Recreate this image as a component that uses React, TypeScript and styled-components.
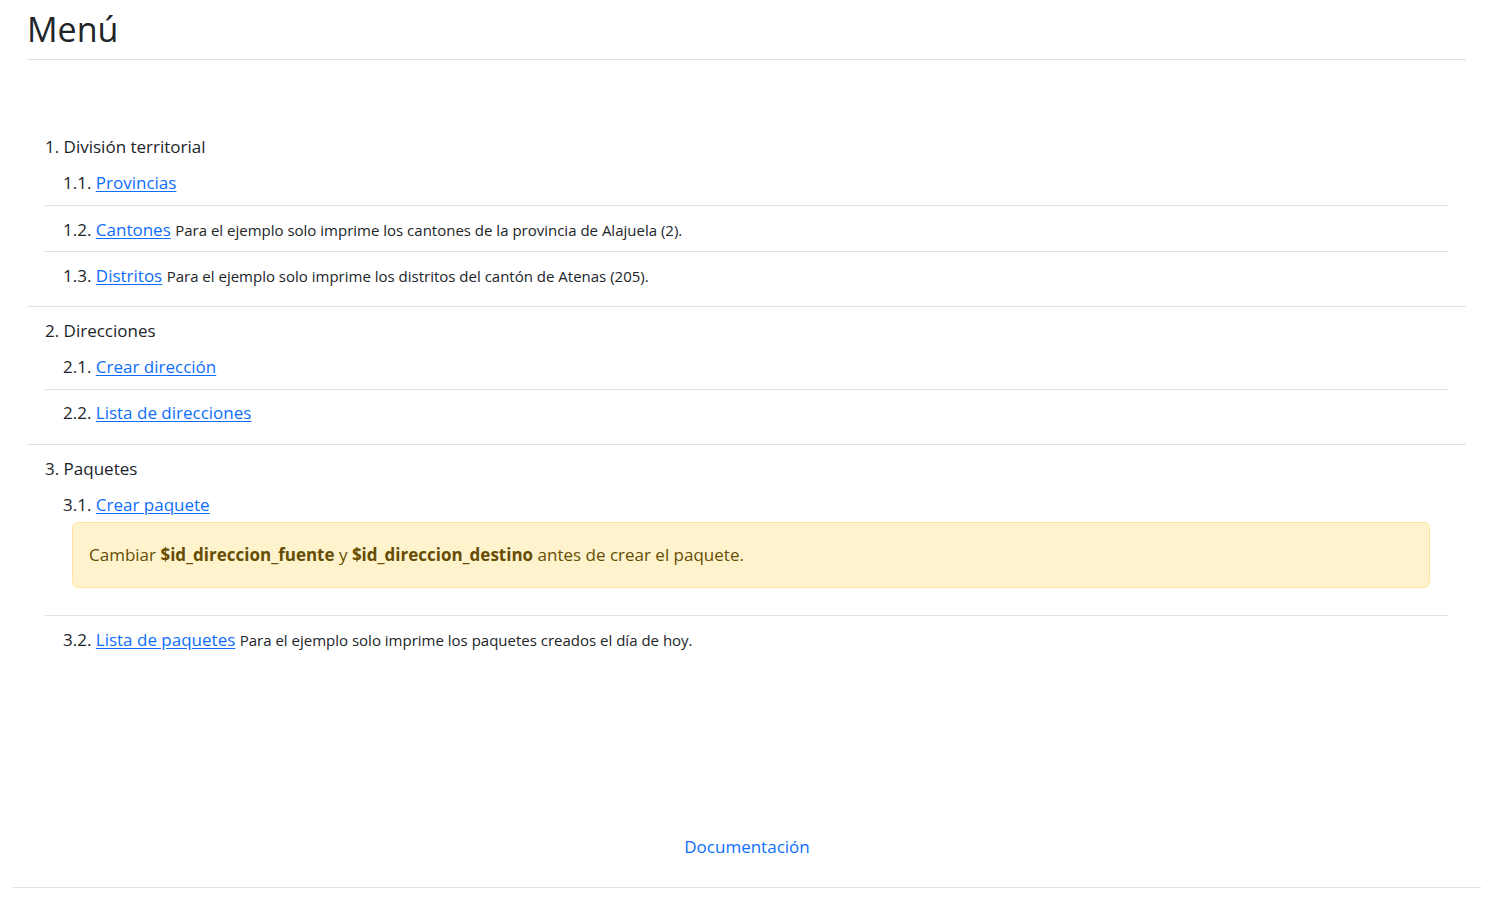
import React from "react";
import styled, { createGlobalStyle } from "styled-components";

const Global = createGlobalStyle`
  html, body { margin: 0; padding: 0; background: #fff; }
  body {
    font-family: "Open Sans", "Noto Sans", sans-serif;
    font-size: 17px;
    line-height: 24px;
    color: #212529;
  }
  * { box-sizing: border-box; }
`;

const Page = styled.div`
  padding: 0 9px 0 13px;
`;

const Main = styled.main`
  padding: 0 15px 0 14px;
`;

const Header = styled.header`
  padding-top: 5px;
  padding-bottom: 6px;
  border-bottom: 1px solid #dee2e6;
`;

const Title = styled.h1`
  margin: 0;
  font-size: 34px;
  line-height: 48px;
  font-weight: 400;
  color: #212529;
`;

const Sections = styled.ol`
  list-style: none;
  margin: 62px 0 0;
  padding: 0;
`;

const Section = styled.li`
  padding: 12px 18px 9px;
  border-top: 1px solid #dee2e6;
  &:first-child { border-top-color: transparent; }
`;

const SectionTitle = styled.div`
  line-height: 24px;
`;

const SubList = styled.ol`
  list-style: none;
  margin: 1px 0 0;
  padding: 0;
`;

const SubItem = styled.li<{ $noted?: boolean }>`
  padding: ${(p) => (p.$noted ? "12px 18px 9px" : "11px 18px 10px")};
  border-top: 1px solid #dee2e6;
  &:first-child { border-top: 0; }
`;

const Link = styled.a`
  color: #0d6efd;
  text-decoration: underline;
  text-underline-offset: 2px;
`;

const Note = styled.small`
  font-size: 15px;
  line-height: 1;
`;

const Alert = styled.div`
  margin: 5px 0 17px 9px;
  padding: 16px;
  border: 1px solid #ffe69c;
  border-radius: 6px;
  background: #fff3cd;
  color: #664d03;
  line-height: 32px;
  b { font-weight: 700; }
`;

const Footer = styled.footer`
  margin-top: 165px;
  padding-bottom: 28px;
  border-bottom: 1px solid #dee2e6;
  text-align: center;
`;

const FooterLink = styled.a`
  color: #0d6efd;
  text-decoration: none;
`;

type Sub = { num: string; label: string; note?: string; alert?: boolean };
type Sec = { num: string; title: string; items: Sub[] };

const data: Sec[] = [
  {
    num: "1.",
    title: "División territorial",
    items: [
      { num: "1.1.", label: "Provincias" },
      { num: "1.2.", label: "Cantones", note: "Para el ejemplo solo imprime los cantones de la provincia de Alajuela (2)." },
      { num: "1.3.", label: "Distritos", note: "Para el ejemplo solo imprime los distritos del cantón de Atenas (205)." },
    ],
  },
  {
    num: "2.",
    title: "Direcciones",
    items: [
      { num: "2.1.", label: "Crear dirección" },
      { num: "2.2.", label: "Lista de direcciones" },
    ],
  },
  {
    num: "3.",
    title: "Paquetes",
    items: [
      { num: "3.1.", label: "Crear paquete", alert: true },
      { num: "3.2.", label: "Lista de paquetes", note: "Para el ejemplo solo imprime los paquetes creados el día de hoy." },
    ],
  },
];

export default function App() {
  return (
    <Page>
      <Global />
      <Main>
        <Header>
          <Title>Menú</Title>
        </Header>
        <Sections>
          {data.map((s) => (
            <Section key={s.num}>
              <SectionTitle>
                {s.num} {s.title}
              </SectionTitle>
              <SubList>
                {s.items.map((it) => (
                  <SubItem key={it.num} $noted={!!it.note}>
                    {it.num} <Link href="#">{it.label}</Link>
                    {it.note && <> <Note>{it.note}</Note></>}
                    {it.alert && (
                      <Alert>
                        Cambiar <b>$id_direccion_fuente</b> y <b>$id_direccion_destino</b> antes de crear el paquete.
                      </Alert>
                    )}
                  </SubItem>
                ))}
              </SubList>
            </Section>
          ))}
        </Sections>
      </Main>
      <Footer>
        <FooterLink href="#">Documentación</FooterLink>
      </Footer>
    </Page>
  );
}
